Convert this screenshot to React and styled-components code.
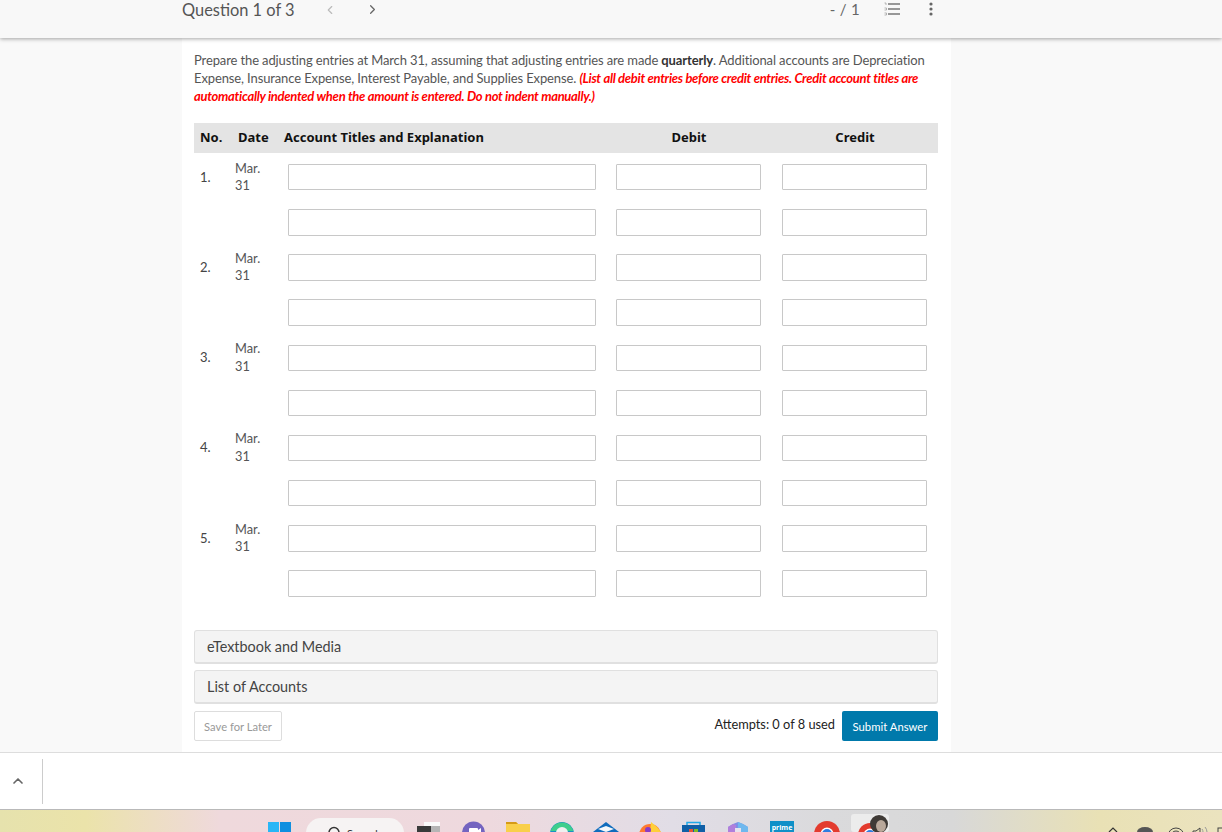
import React from "react";
import styled, { createGlobalStyle } from "styled-components";
import { ChevronLeft, ChevronRight, ChevronUp } from "lucide-react";

const GlobalStyle = createGlobalStyle`
  html, body {
    margin: 0;
    padding: 0;
    height: 100%;
    overflow: hidden;
    background: #fff;
    font-family: Lato, "Liberation Sans", sans-serif;
  }
  * { box-sizing: border-box; }
`;

const Page = styled("div")`
  width: 1222px;
  height: 832px;
  display: flex;
  flex-direction: column;
  overflow: hidden;
`;

const TopBar = styled("header")`
  height: 38px;
  flex: none;
  position: relative;
  z-index: 1;
  display: flex;
  align-items: flex-start;
  padding-left: 182px;
  background: #f8f8f8;
  box-shadow: 0 1px 4px rgba(0, 0, 0, 0.35);
  color: #555;
`;

const QuestionTitle = styled("div")`
  font-size: 16.4px;
  line-height: 19px;
  width: 139px;
`;

const Pager = styled("div")`
  display: flex;
  gap: 26px;
  padding-top: 2px;
`;

const PagerIcon = styled("span")`
  width: 17px;
  height: 15px;
  display: flex;
  align-items: center;
  justify-content: center;
  color: ${(p) => (p.$disabled ? "#bbb" : "#666")};
`;

const Score = styled("div")`
  margin-left: auto;
  font-size: 15px;
  line-height: 19px;
  color: #666;
  letter-spacing: 0.3px;
`;

const ListIcon = styled("svg")`
  margin: 2px 0 0 24px;
  display: block;
`;

const DotsIcon = styled("svg")`
  margin: 2px 289px 0 29px;
  display: block;
`;

const Main = styled("main")`
  height: 714px;
  flex: none;
  background: #f9f9f9;
`;

const Sheet = styled("div")`
  width: 769px;
  height: 100%;
  margin-left: 182px;
  padding: 13px 13px 0 12px;
  background: #fff;
`;

const Prompt = styled("p")`
  margin: 0;
  height: 72px;
  font-size: 13px;
  line-height: 18px;
  letter-spacing: -0.12px;
  color: #555;
`;

const Strong = styled("strong")`
  color: #333;
  font-weight: 700;
`;

const Warning = styled("em")`
  color: #ff0000;
  font-weight: 700;
  font-style: italic;
  letter-spacing: -0.29px;
`;

const HeadRow = styled("div")`
  height: 30px;
  display: grid;
  grid-template-columns: 38px 46px 1fr 166px 166px;
  align-items: center;
  padding: 0 0 2px 6px;
  background: #e4e4e4;
  color: #111;
  font-family: "Noto Sans", "Open Sans", sans-serif;
  font-size: 13px;
  font-weight: 700;
`;

const HeadCell = styled("div")`
  text-align: ${(p) => (p.$center ? "center" : "left")};
`;

const Entries = styled("div")`
  padding-top: 11px;
  height: 477px;
`;

const EntryRow = styled("div")`
  height: 45.15px;
  display: grid;
  grid-template-columns: 41px 53px 308px 165px 166px;
`;

const RowNumber = styled("div")`
  padding: 3.5px 0 0 6px;
  font-size: 13px;
  line-height: 18px;
  color: #444;
`;

const DateCell = styled("div")`
  margin-top: -4.4px;
  font-size: 12.8px;
  line-height: 17.5px;
  color: #555;
`;

const TitleInput = styled("input")`
  width: 308px;
  height: 26.4px;
  border: 1px solid #c8c8c8;
  border-radius: 1px;
  background: #fff;
`;

const AmountInput = styled(TitleInput)`
  width: 145px;
  justify-self: end;
`;

const Accordion = styled("div")`
  height: 34px;
  display: flex;
  align-items: center;
  padding-left: 12px;
  background: #f4f4f4;
  border: 1px solid #e0e0e0;
  border-bottom-width: 2px;
  border-radius: 3px;
  font-size: 14.4px;
  color: #444;
  & + & {
    margin-top: 6px;
  }
`;

const Actions = styled("div")`
  display: flex;
  align-items: flex-start;
  margin-top: 7px;
`;

const SaveButton = styled("button")`
  width: 88px;
  height: 30px;
  padding: 0;
  background: #fff;
  border: 1px solid #ddd;
  border-radius: 2px;
  color: #999;
  font-family: inherit;
  font-size: 11.2px;
`;

const Attempts = styled("div")`
  margin-left: auto;
  margin-right: 7px;
  padding-top: 4px;
  font-size: 12.8px;
  line-height: 18px;
  color: #222;
`;

const SubmitButton = styled("button")`
  width: 96px;
  height: 30px;
  padding: 0;
  background: #0079ab;
  border: none;
  border-radius: 2px;
  color: #fff;
  font-family: inherit;
  font-size: 11.3px;
`;

const Footer = styled("footer")`
  height: 57px;
  flex: none;
  display: flex;
  align-items: center;
  background: #fff;
  border-top: 1px solid #ddd;
`;

const FooterToggle = styled("div")`
  width: 43px;
  height: 45px;
  display: flex;
  align-items: center;
  justify-content: center;
  padding-right: 7px;
  color: #666;
  border-right: 1px solid #ccc;
`;

const Taskbar = styled("div")`
  height: 23px;
  flex: none;
  display: flex;
  padding: 0 0 0 268px;
  position: relative;
  border-top: 1px solid #b9b9b9;
  background: linear-gradient(
    90deg,
    #e6e2ad 0%,
    #ebe3aa 7%,
    #efd9dc 18%,
    #eed9de 40%,
    #e1dde6 55%,
    #dadadc 68%,
    #d8d8d8 78%,
    #e9e1b5 90%,
    #ebe3bf 100%
  );
`;

const TrayArt = styled("svg")`
  display: block;
  flex: none;
  position: relative;
  z-index: 1;
`;

const SearchPill = styled("div")`
  position: absolute;
  left: 306px;
  top: 8px;
  width: 98px;
  height: 30px;
  padding: 8px 0 0 41px;
  border-radius: 15px;
  background: #f6f3f3;
  font-family: "Noto Sans", sans-serif;
  font-size: 11px;
  line-height: 15px;
  color: #333;
`;

const rows = [1, 2, 3, 4, 5];

const Entry = ({ number }) => (
  <>
    <EntryRow>
      <RowNumber>{number}.</RowNumber>
      <DateCell>
        Mar.
        <br />
        31
      </DateCell>
      <TitleInput />
      <AmountInput />
      <AmountInput />
    </EntryRow>
    <EntryRow>
      <div />
      <div />
      <TitleInput />
      <AmountInput />
      <AmountInput />
    </EntryRow>
  </>
);

const TaskbarIcons = () => (
  <TrayArt width="954" height="22" viewBox="268 810 954 22">
    {/* windows */}
    <rect x="268" y="822" width="11" height="10" fill="#29b6f6" />
    <rect x="280" y="822" width="11" height="10" fill="#0f8fe0" />
    {/* search glass */}
    <circle cx="334" cy="832.500" r="5" fill="none" stroke="#333" strokeWidth="1.5" />
    {/* task view */}
    <rect x="424" y="822" width="16" height="10" fill="#fafafa" />
    <rect x="417" y="826" width="14" height="6" fill="#3a3a3a" />
    <rect x="431" y="826" width="9" height="6" fill="#b5b5b5" />
    {/* chat */}
    <circle cx="473.500" cy="833" r="11.500" fill="#7464c0" />
    <rect x="469" y="828" width="9" height="5" rx="1" fill="#fff" />
    <path d="M478 830l3 -2v5h-3z" fill="#fff" />
    {/* folder */}
    <path d="M506 822h10l2 2h12v8h-24z" fill="#f9cf4a" />
    <path d="M506 822h10l2 2h-12z" fill="#d59a16" />
    {/* edge */}
    <circle cx="562" cy="834" r="12" fill="#1692c4" />
    <path d="M550.500 831a12 12 0 0 1 23 0z" fill="#3fce8c" />
    <path d="M556 833a6 6 0 0 1 12 0z" fill="#f0f0f0" />
    {/* mail */}
    <path d="M593 832l13-10 13 10z" fill="#0f6cbd" />
    <path d="M598 829l8-3 8 3 -8 3z" fill="#f4f8fb" />
    {/* firefox */}
    <circle cx="650" cy="835" r="11" fill="#ff7a2f" />
    <path d="M651 822l6 5 4 5h-11z" fill="#ffcf3a" />
    <circle cx="648" cy="830" r="3" fill="#8a3bc6" />
    {/* store */}
    <rect x="682" y="825" width="23" height="7" fill="#0f5fa6" />
    <path d="M687 825v-2.500h13v2.500" fill="none" stroke="#21a9e8" strokeWidth="1.5" />
    <rect x="689" y="829" width="4" height="3" fill="#e8533a" />
    <rect x="694" y="829" width="4" height="3" fill="#7fba2a" />
    {/* copilot */}
    <path d="M733 824l5 -2 5 2 5 3v5h-20v-5z" fill="#7f8fe6" />
    <path d="M738 822l5 2 5 3v5h-10z" fill="#6fb8ee" />
    <path d="M733 824l3 1v7h-8v-5z" fill="#b07fdc" />
    <rect x="735" y="828" width="6" height="4" fill="#e6e3ee" />
    {/* prime */}
    <rect x="770" y="821" width="24" height="11" fill="#0f90c8" />
    <text x="782" y="830" fill="#fff" fontSize="7" fontWeight="700" textAnchor="middle" fontFamily="Noto Sans, sans-serif">prime</text>
    {/* chrome */}
    <circle cx="827" cy="834" r="13" fill="#e33b2e" />
    <path d="M814 834a13 13 0 0 0 26 0z" fill="#35a853" />
    <circle cx="827" cy="834" r="6.500" fill="#fff" />
    <circle cx="827" cy="834" r="5" fill="#2f7de1" />
    {/* active chrome with avatar */}
    <rect x="851" y="814" width="38" height="18" rx="3" fill="#ececec" />
    <circle cx="870" cy="835" r="12" fill="#e33b2e" />
    <circle cx="870" cy="835" r="6.500" fill="#fff" />
    <circle cx="870" cy="835" r="5" fill="#2f7de1" />
    <circle cx="879" cy="824" r="9" fill="#3f3a36" />
    <ellipse cx="881" cy="826" rx="5" ry="6" fill="#b9a89a" />
    {/* tray */}
    <path d="M1109 832l4 -4 4 4" fill="none" stroke="#333" strokeWidth="1.2" />
    <path d="M1137 832a8 5 0 0 1 16 0z" fill="#555" />
    <circle cx="1176" cy="836" r="8" fill="none" stroke="#444" />
    <circle cx="1176" cy="836" r="5" fill="none" stroke="#444" />
    <path d="M1193 832v-1h3l4 -3v4" fill="none" stroke="#444" />
    <path d="M1202 829a5 5 0 0 1 1 3M1205 827a8 8 0 0 1 2 5" fill="none" stroke="#999" />
    <rect x="1218" y="828" width="5" height="5" fill="none" stroke="#444" />
  </TrayArt>
);

export default function App() {
  return (
    <Page>
      <GlobalStyle />
      <TopBar>
        <QuestionTitle>Question 1 of 3</QuestionTitle>
        <Pager>
          <PagerIcon $disabled>
            <ChevronLeft size={14} strokeWidth={2} />
          </PagerIcon>
          <PagerIcon>
            <ChevronRight size={15} strokeWidth={2} />
          </PagerIcon>
        </Pager>
        <Score>- / 1</Score>
        <ListIcon width="16" height="14" viewBox="0 0 16 14">
          <path d="M4 2h12M4 7h12M4 12h12" stroke="#777" strokeWidth="1.3" />
          <path d="M0.500 1h1.500v2M0.500 6h2v2h-2M0.500 11h2v2h-2" fill="none" stroke="#999" strokeWidth="0.7" />
        </ListIcon>
        <DotsIcon width="4" height="14" viewBox="0 0 4 14">
          <circle cx="2" cy="2" r="1.600" fill="#666" />
          <circle cx="2" cy="7" r="1.600" fill="#666" />
          <circle cx="2" cy="12" r="1.600" fill="#666" />
        </DotsIcon>
      </TopBar>
      <Main>
        <Sheet>
          <Prompt>
            Prepare the adjusting entries at March 31, assuming that adjusting entries are made{" "}
            <Strong>quarterly</Strong>. Additional accounts are Depreciation Expense, Insurance
            Expense, Interest Payable, and Supplies Expense.{" "}
            <Warning>
              (List all debit entries before credit entries. Credit account titles are
              automatically indented when the amount is entered. Do not indent manually.)
            </Warning>
          </Prompt>
          <HeadRow>
            <HeadCell>No.</HeadCell>
            <HeadCell>Date</HeadCell>
            <HeadCell>Account Titles and Explanation</HeadCell>
            <HeadCell $center>Debit</HeadCell>
            <HeadCell $center>Credit</HeadCell>
          </HeadRow>
          <Entries>
            {rows.map((n) => (
              <Entry key={n} number={n} />
            ))}
          </Entries>
          <Accordion>eTextbook and Media</Accordion>
          <Accordion>List of Accounts</Accordion>
          <Actions>
            <SaveButton>Save for Later</SaveButton>
            <Attempts>Attempts: 0 of 8 used</Attempts>
            <SubmitButton>Submit Answer</SubmitButton>
          </Actions>
        </Sheet>
      </Main>
      <Footer>
        <FooterToggle>
          <ChevronUp size={16} strokeWidth={2.5} />
        </FooterToggle>
      </Footer>
      <Taskbar>
        <TaskbarIcons />
        <SearchPill>Search</SearchPill>
      </Taskbar>
    </Page>
  );
}
